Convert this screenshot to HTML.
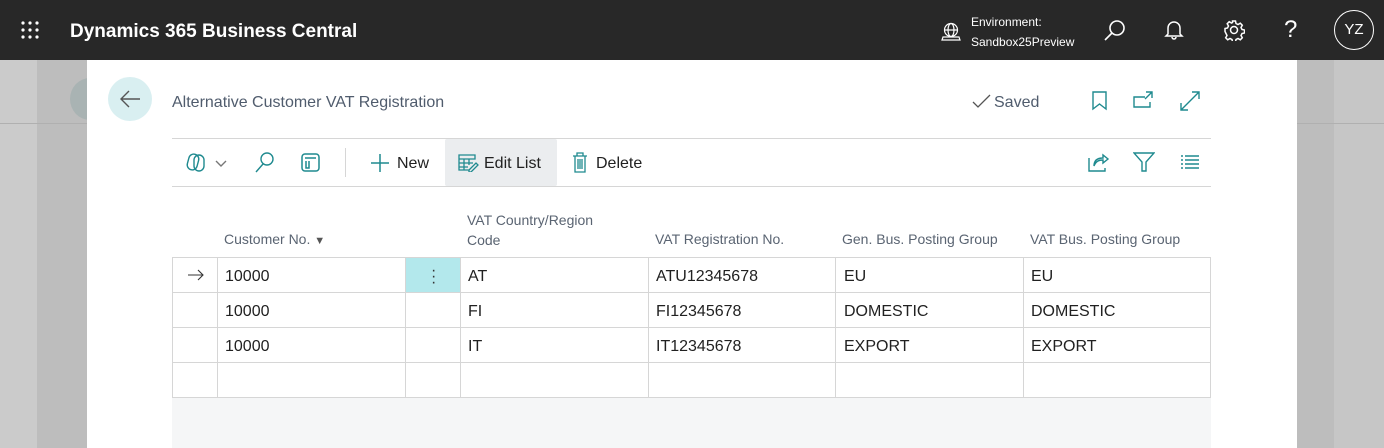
<!DOCTYPE html>
<html><head><style>
*{margin:0;padding:0;box-sizing:border-box}
body{width:1384px;height:448px;overflow:hidden;font-family:"Segoe UI","Liberation Sans",sans-serif;background:#c6c6c6;position:relative}
.top{position:absolute;left:0;top:0;width:1384px;height:60px;background:#282828;color:#fff}
.abs{position:absolute}
.dlg{position:absolute;left:87px;top:60px;width:1210px;height:388px;background:#fff}
.t{color:#212121;font-size:16px}
.h{color:#5a6472;font-size:14px;position:absolute}
.cell{position:absolute;font-size:16px;color:#212121}
svg{position:absolute}
</style></head><body>
<div class="abs" style="left:0;top:60px;width:37px;height:388px;background:#cbcbcb"></div>
<div class="abs" style="left:37px;top:60px;width:50px;height:388px;background:#bdbdbd"></div>
<div class="abs" style="left:0;top:123px;width:87px;height:1px;background:#b0b0b0"></div>
<div class="abs" style="left:70px;top:78px;width:40px;height:42px;border-radius:50%;background:#a9b3b3"></div>
<div class="abs" style="left:1297px;top:60px;width:37px;height:388px;background:#bdbdbd"></div>
<div class="abs" style="left:1334px;top:60px;width:50px;height:388px;background:#c6c6c6"></div>
<div class="abs" style="left:1297px;top:123px;width:87px;height:1px;background:#b0b0b0"></div>
<div class="top">
<svg style="left:20px;top:20px" width="20" height="20" fill="#fff"><circle cx="3" cy="3" r="1.6"/><circle cx="10" cy="3" r="1.6"/><circle cx="17" cy="3" r="1.6"/><circle cx="3" cy="10" r="1.6"/><circle cx="10" cy="10" r="1.6"/><circle cx="17" cy="10" r="1.6"/><circle cx="3" cy="17" r="1.6"/><circle cx="10" cy="17" r="1.6"/><circle cx="17" cy="17" r="1.6"/></svg>
<div class="abs" style="left:70px;top:21px;font-size:19px;font-weight:bold">Dynamics 365 Business Central</div>
<svg style="left:940px;top:22px" width="22" height="20" fill="none" stroke="#fff" stroke-width="1.2"><circle cx="11" cy="8" r="6.5"/><ellipse cx="11" cy="8" rx="3" ry="6.5"/><path d="M4.5 8h13M3 15h16l1 3H2z"/></svg>
<div class="abs" style="left:971px;top:12px;font-size:12px;line-height:20px">Environment:<br>Sandbox25Preview</div>
<svg style="left:1103px;top:19px" width="24" height="24" fill="none" stroke="#fff" stroke-width="1.6"><circle cx="14" cy="9" r="7"/><path d="M9 14L2 21"/></svg>
<svg style="left:1164px;top:19px" width="20" height="22" fill="none" stroke="#fff" stroke-width="1.5"><path d="M4 15V9a6 6 0 0112 0v6l2 2H2z M8 18a2 2 0 004 0"/></svg>
<svg style="left:1223px;top:19px" width="22" height="22" fill="none" stroke="#fff" stroke-width="1.5"><circle cx="11" cy="11" r="3.5"/><path d="M9.5 2h3l.5 2.5 2 1 2.3-1.3 2 2-1.3 2.3 1 2 2.5.5v3l-2.5.5-1 2 1.3 2.3-2 2-2.3-1.3-2 1-.5 2.5h-3l-.5-2.5-2-1-2.3 1.3-2-2 1.3-2.3-1-2L2 12.5v-3l2.5-.5 1-2L4.2 4.7l2-2L8.5 4l1-.5z"/></svg>
<div class="abs" style="left:1284px;top:16px;font-size:24px;font-weight:300">?</div>
<div class="abs" style="left:1334px;top:10px;width:40px;height:40px;border:1.5px solid #fff;border-radius:50%;text-align:center;line-height:37px;font-size:15px">YZ</div>
</div>
<div class="dlg"></div>
<div class="abs" style="left:108px;top:77px;width:44px;height:44px;border-radius:50%;background:#d9eff1"></div>
<svg style="left:118px;top:88px" width="24" height="22" fill="none" stroke="#555" stroke-width="1.4"><path d="M22 11H3M11 3l-8 8 8 8"/></svg>
<div class="abs" style="left:172px;top:94px;font-size:16px;color:#505c6d">Alternative Customer VAT Registration</div>
<svg style="left:972px;top:93px" width="20" height="16" fill="none" stroke="#555" stroke-width="1.3"><path d="M1 9l5 5L18 2"/></svg>
<div class="abs" style="left:994px;top:94px;font-size:16px;color:#505c6d">Saved</div>
<svg style="left:1092px;top:91px" width="16" height="20" fill="none" stroke="#1f8a8f" stroke-width="1.4"><path d="M1 1h13v17l-6.5-5L1 18z"/></svg>
<svg style="left:1133px;top:91px" width="22" height="18" fill="none" stroke="#1f8a8f" stroke-width="1.4"><path d="M12 6H1v10h16v-5M13 1h6v6M19 1l-7 7"/></svg>
<svg style="left:1180px;top:91px" width="20" height="20" fill="none" stroke="#1f8a8f" stroke-width="1.4"><path d="M1 19L19 1M12 1h7v7M1 12v7h7"/></svg>
<div class="abs" style="left:172px;top:138px;width:1039px;height:1px;background:#d6d6d6"></div>
<div class="abs" style="left:172px;top:186px;width:1039px;height:1px;background:#d6d6d6"></div>
<svg style="left:186px;top:152px" width="44" height="22" fill="none" stroke="#1f8a8f" stroke-width="1.4"><rect x="2" y="2" width="10" height="16" rx="5" transform="rotate(15 7 10)"/><rect x="8" y="3" width="10" height="16" rx="5"/><path d="M30 9l5 5 5-5" stroke="#777"/></svg>
<svg style="left:254px;top:151px" width="22" height="24" fill="none" stroke="#1f8a8f" stroke-width="1.4"><circle cx="13" cy="8" r="6"/><path d="M9 13L2 21"/></svg>
<svg style="left:300px;top:152px" width="22" height="22" fill="none" stroke="#1f8a8f" stroke-width="1.5"><rect x="2" y="2" width="17" height="17" rx="3"/><path d="M5 6h11M6 9v7h3V9" /></svg>
<div class="abs" style="left:345px;top:148px;width:1px;height:29px;background:#d6d6d6"></div>
<svg style="left:370px;top:153px" width="20" height="20" fill="none" stroke="#1f8a8f" stroke-width="1.5"><path d="M10 1v18M1 10h18"/></svg>
<div class="abs t" style="left:397px;top:155px">New</div>
<div class="abs" style="left:445px;top:139px;width:112px;height:47px;background:#ebedef;border-radius:2px"></div>
<svg style="left:458px;top:154px" width="22" height="18" fill="none" stroke="#1f8a8f" stroke-width="1.3"><path d="M1 1h16v4H1zM1 5v11h10M6 5v11M11 5v6M1 9h14M1 13h9M11 16l7-7 2 2-7 7h-2z"/></svg>
<div class="abs t" style="left:484px;top:155px">Edit List</div>
<svg style="left:572px;top:152px" width="16" height="22" fill="none" stroke="#1f8a8f" stroke-width="1.3"><path d="M1 4h14M5 4V1h6v3M3 4v16h10V4M6 7v10M8 7v10M10 7v10"/></svg>
<div class="abs t" style="left:596px;top:155px">Delete</div>
<svg style="left:1088px;top:152px" width="22" height="20" fill="none" stroke="#1f8a8f" stroke-width="1.4"><path d="M1 6v13h16v-3M6 14c0-6 4-8 9-8V3l5 4-5 4V8c-4 0-7 1-9 6z"/></svg>
<svg style="left:1133px;top:152px" width="22" height="20" fill="none" stroke="#1f8a8f" stroke-width="1.4"><path d="M1 1h20l-8 9v9h-4v-9z"/></svg>
<svg style="left:1180px;top:155px" width="20" height="14" fill="none" stroke="#1f8a8f" stroke-width="1.4"><path d="M1 1h2M1 5h2M1 9h2M1 13h2M5 1h14M5 5h14M5 9h14M5 13h14"/></svg>
<div class="h" style="left:224px;top:231px">Customer No. <span style="font-size:11px;color:#555">▼</span></div>
<div class="h" style="left:467px;top:210px;line-height:20px">VAT Country/Region<br>Code</div>
<div class="h" style="left:655px;top:231px">VAT Registration No.</div>
<div class="h" style="left:842px;top:231px">Gen. Bus. Posting Group</div>
<div class="h" style="left:1030px;top:231px">VAT Bus. Posting Group</div>
<div class="abs" style="left:172px;top:398px;width:1039px;height:50px;background:#f5f6f7"></div>
<div class="abs" style="left:405px;top:258px;width:55px;height:35px;background:#b3e8ec"></div>
<svg style="left:172px;top:257px" width="1040" height="142"><g stroke="#d6d6d6" stroke-width="1"><path d="M0 .5H1039M0 35.5H1039M0 70.5H1039M0 105.5H1039M0 140.5H1039"/><path d="M.5 0v141M45.5 0v141M233.5 0v141M288.5 0v141M476.5 0v141M663.5 0v141M851.5 0v141M1038.5 0v141"/></g></svg>
<svg style="left:187px;top:269px" width="18" height="12" fill="none" stroke="#333" stroke-width="1.1"><path d="M1 6h15M11 1l5 5-5 5"/></svg>
<div class="abs" style="left:431px;top:268px;width:3px;height:16px;color:#333;font-size:16px;line-height:6px">·<br>·<br>·</div>
<div class="cell" style="left:225px;top:268px">10000</div><div class="cell" style="left:468px;top:268px">AT</div><div class="cell" style="left:656px;top:268px">ATU12345678</div><div class="cell" style="left:844px;top:268px">EU</div><div class="cell" style="left:1031px;top:268px">EU</div>
<div class="cell" style="left:225px;top:303px">10000</div><div class="cell" style="left:468px;top:303px">FI</div><div class="cell" style="left:656px;top:303px">FI12345678</div><div class="cell" style="left:844px;top:303px">DOMESTIC</div><div class="cell" style="left:1031px;top:303px">DOMESTIC</div>
<div class="cell" style="left:225px;top:338px">10000</div><div class="cell" style="left:468px;top:338px">IT</div><div class="cell" style="left:656px;top:338px">IT12345678</div><div class="cell" style="left:844px;top:338px">EXPORT</div><div class="cell" style="left:1031px;top:338px">EXPORT</div>
</body></html>
